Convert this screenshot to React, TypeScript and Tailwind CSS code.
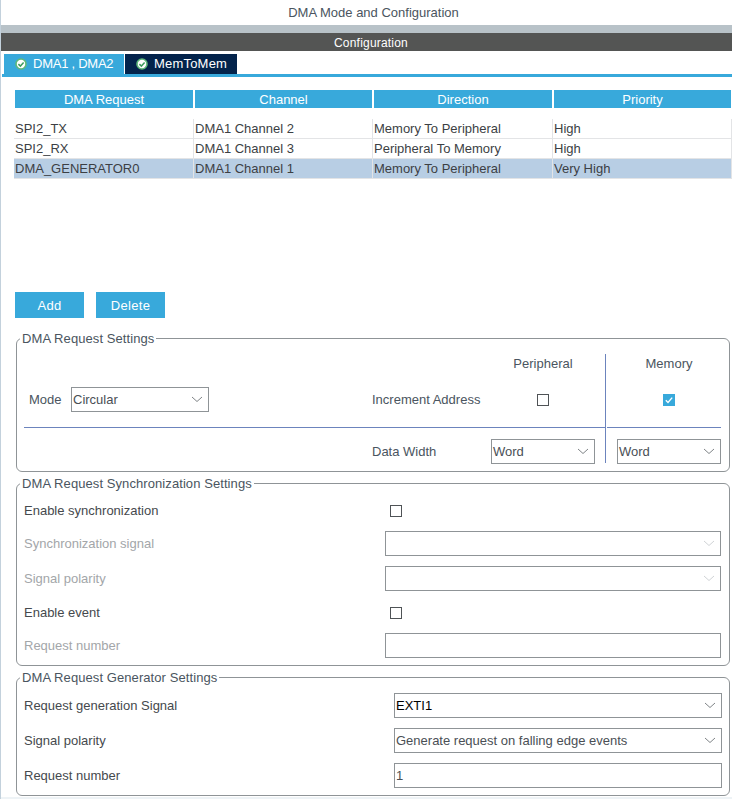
const font = "font-['Liberation_Sans',Arial,sans-serif]";

function Chevron({ faint = false }: { faint?: boolean }) {
  return (
    <svg width="13" height="7" viewBox="0 0 13 7" fill="none" className="shrink-0">
      <path d="M2 1l5 4.5L12 1" stroke={faint ? "#d0d3d6" : "#7f8487"} strokeWidth="1" />
    </svg>
  );
}

function TabIcon() {
  return (
    <svg width="12" height="12" viewBox="0 0 12 12" className="shrink-0">
      <circle cx="6" cy="6" r="5" fill="#ffffff" stroke="#5fb87a" strokeWidth="1.6" />
      <path d="M3.4 6.1l2 2 3.2-3.6" fill="none" stroke="#3f9c5f" strokeWidth="1.5" />
    </svg>
  );
}

function Checkbox({ checked = false }: { checked?: boolean }) {
  if (checked) {
    return (
      <div className="w-3 h-3 bg-[#38a9db] flex items-center justify-center">
        <svg width="10" height="10" viewBox="0 0 10 10">
          <path d="M1.8 5.2l2.2 2.2 4.2-4.8" fill="none" stroke="#ffffff" strokeWidth="1.4" />
        </svg>
      </div>
    );
  }
  return <div className="w-3 h-3 border border-[#4f5356] bg-white" />;
}

function Select({ value, width, faint, dark }: { value?: string; width: string; faint?: boolean; dark?: boolean }) {
  return (
    <div className={`${width} h-[25px] border border-[#8f9497] bg-white flex items-center justify-between pl-px pr-[5px]`}>
      <span className={dark ? "text-black" : "text-[#4a4f55]"}>{value}</span>
      <Chevron faint={faint} />
    </div>
  );
}

function Field({ value, width }: { value?: string; width: string }) {
  return (
    <div className={`${width} h-[25px] border border-[#8f9497] bg-white flex items-center pl-px text-[#4a4f55]`}>
      {value}
    </div>
  );
}

function Group({ title, children }: { title: string; children: React.ReactNode }) {
  return (
    <fieldset className="border border-[#8f9497] rounded-md ml-[15px] w-[714px] px-[7px]">
      <legend className="ml-[-4px] px-0.5 h-4 leading-[18px] text-[#4a5560] tracking-[0.08px]">{title}</legend>
      {children}
    </fieldset>
  );
}

function Row({ label, muted, className, children }: { label: string; muted?: boolean; className?: string; children: React.ReactNode }) {
  return (
    <div className={`flex items-center h-[25px] ${className ?? ""}`}>
      <span className={muted ? "text-[#a3a6a9]" : "text-[#45494d]"}>{label}</span>
      {children}
    </div>
  );
}

const requests = [
  ["SPI2_TX", "DMA1 Channel 2", "Memory To Peripheral", "High"],
  ["SPI2_RX", "DMA1 Channel 3", "Peripheral To Memory", "High"],
  ["DMA_GENERATOR0", "DMA1 Channel 1", "Memory To Peripheral", "Very High"],
];

const columns = ["DMA Request", "Channel", "Direction", "Priority"];
const headWidths = ["w-[178px]", "w-[177px]", "w-[178px]", "w-[177px]"];
const cellWidths = ["w-[180px]", "w-[179px]", "w-[180px]", "w-[179px]"];

export default function App() {
  return (
    <div className={`${font} text-[13px] w-[732px] h-[799px] overflow-hidden bg-white border-l border-[#c3d1dc] text-[#45494d]`}>
      <div className="h-[25px] flex items-center justify-center pl-[14px] text-[#4a5560]">
        DMA Mode and Configuration
      </div>
      <div className="h-2 bg-[#b8c2c8]" />
      <div className="h-[18px] bg-[#545554] text-white text-[12px] tracking-[0.2px] flex items-center justify-center pl-[9px] pt-px">
        Configuration
      </div>

      <div className="flex h-5 mt-[3px] pl-[3px] text-white">
        <div className="w-[120px] bg-[#38a9db] flex items-center gap-[6px] pl-[11px] tracking-[-0.25px]">
          <TabIcon />
          <span>DMA1 , DMA2</span>
        </div>
        <div className="w-[112px] ml-px bg-[#03234b] flex items-center gap-[6px] pl-[11px] tracking-[0.2px]">
          <TabIcon />
          <span>MemToMem</span>
        </div>
      </div>
      <div className="h-[3px] ml-px bg-[#38a9db]" />

      {/* request table */}
      <div className="flex mt-[13px] ml-[14px] gap-[2px] h-[18px] text-white">
        {columns.map((c, i) => (
          <div key={c} className={`${headWidths[i]} bg-[#38a9db] text-center leading-[19px]`}>
            {c}
          </div>
        ))}
      </div>
      <div className="mt-[11px] ml-[13px] h-[60px] text-[#3c3f44]">
        {requests.map((r, i) => (
          <div key={r[0]} className={`flex h-5 border-b border-[#e3e4e6] ${i === 2 ? "bg-[#b8cee4]" : ""}`}>
            {r.map((cell, j) => (
              <div key={j} className={`${cellWidths[j]} pl-px leading-[19px] border-r border-[#e3e4e6] whitespace-nowrap`}>
                {cell}
              </div>
            ))}
          </div>
        ))}
      </div>

      <div className="flex gap-3 mt-[113px] ml-[14px] text-white">
        <button className="w-[69px] h-[26px] pt-px bg-[#38a9db] tracking-[0.3px]">Add</button>
        <button className="w-[69px] h-[26px] pt-px bg-[#38a9db] tracking-[0.3px]">Delete</button>
      </div>

      {/* settings groups */}
      <div className="mt-[12px]">
        <Group title="DMA Request Settings">
          <div className="grid grid-cols-[348px_119px_104px_10px_1px_11px_104px] grid-rows-[22px_51px_1px_36px] mt-[8px] mb-[7px] text-[#4a5560]">
            <div className="col-start-3 row-start-1 text-center leading-[20px]">Peripheral</div>
            <div className="col-start-5 row-start-1 row-span-4 bg-[#6c84bd] h-[109px]" />
            <div className="col-start-7 row-start-1 text-center leading-[20px]">Memory</div>

            <div className="row-start-2 flex items-center pl-[5px] pb-[4px]">
              <span className="w-[42px]">Mode</span>
              <Select value="Circular" width="w-[138px]" />
            </div>
            <div className="row-start-2 col-start-2 flex items-center pb-[4px] whitespace-nowrap">Increment Address</div>
            <div className="row-start-2 col-start-3 flex items-center justify-center pb-[4px]"><Checkbox /></div>
            <div className="row-start-2 col-start-7 flex items-center justify-center pb-[4px]"><Checkbox checked /></div>

            <div className="row-start-3 col-start-1 col-span-5 bg-[#6c84bd]" />
            <div className="row-start-3 col-start-6 col-span-2 ml-px bg-[#6c84bd]" />

            <div className="row-start-4 col-start-2 flex items-end h-[36px] leading-[25px]">Data Width</div>
            <div className="row-start-4 col-start-3 flex items-end"><Select value="Word" width="w-[104px]" /></div>
            <div className="row-start-4 col-start-7 flex items-end"><Select value="Word" width="w-[104px]" /></div>
          </div>
        </Group>

        <div className="mt-[3px]">
          <Group title="DMA Request Synchronization Settings">
            <div className="pt-[7px] pb-[7px] pr-px">
              <Row label="Enable synchronization">
                <div className="ml-auto mr-[319px]"><Checkbox /></div>
              </Row>
              <Row label="Synchronization signal" muted className="mt-2 justify-between">
                <Select width="w-[336px]" faint />
              </Row>
              <Row label="Signal polarity" muted className="mt-[10px] justify-between">
                <Select width="w-[336px]" faint />
              </Row>
              <Row label="Enable event" className="mt-[9px]">
                <div className="ml-auto mr-[319px]"><Checkbox /></div>
              </Row>
              <Row label="Request number" muted className="mt-2 justify-between">
                <Field width="w-[336px]" />
              </Row>
            </div>
          </Group>
        </div>

        <div className="mt-[3px]">
          <Group title="DMA Request Generator Settings">
            <div className="pt-[8px] pb-[7px]">
              <Row label="Request generation Signal" className="justify-between">
                <Select value="EXTI1" width="w-[328px]" dark />
              </Row>
              <Row label="Signal polarity" className="mt-[10px] justify-between">
                <Select value="Generate request on falling edge events" width="w-[328px]" />
              </Row>
              <Row label="Request number" className="mt-[10px] justify-between">
                <Field value="1" width="w-[328px]" />
              </Row>
            </div>
          </Group>
        </div>
      </div>
      <div className="h-[3px] mt-px bg-[#eef3f6]" />
    </div>
  );
}
